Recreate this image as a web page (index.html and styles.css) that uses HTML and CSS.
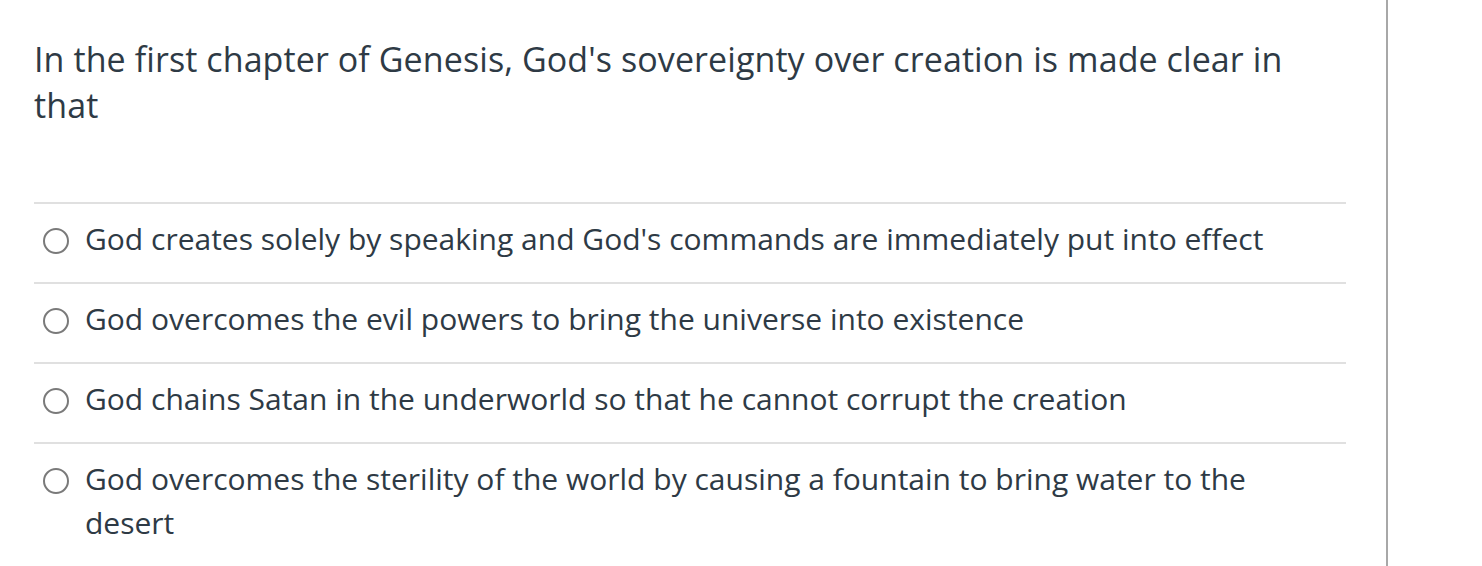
FILE: index.html
```html
<!DOCTYPE html>
<html lang="en">
<head>
    <meta charset="UTF-8">
    <meta name="viewport" content="width=device-width, initial-scale=1.0">
    <title>Question</title>
    <link rel="stylesheet" href="styles.css">
</head>
<body>
    <div class="panel">
        <div class="question">
            In the first chapter of Genesis, God's sovereignty over creation is made clear in that
        </div>

        <ul class="answers">
            <li class="answer">
                <span class="radio"></span>
                <span class="answer-text">God creates solely by speaking and God's commands are immediately put into effect</span>
            </li>
            <li class="answer">
                <span class="radio"></span>
                <span class="answer-text">God overcomes the evil powers to bring the universe into existence</span>
            </li>
            <li class="answer">
                <span class="radio"></span>
                <span class="answer-text">God chains Satan in the underworld so that he cannot corrupt the creation</span>
            </li>
            <li class="answer">
                <span class="radio"></span>
                <span class="answer-text">God overcomes the sterility of the world by causing a fountain to bring water to the desert</span>
            </li>
        </ul>
    </div>
</body>
</html>
```

FILE: styles.css
```css
body {
    margin: 0;
    background: #fff;
    font-family: "Open Sans", "Liberation Sans", sans-serif;
    color: #2e3a45;
    overflow: hidden;
}
.panel {
    width: 1312px;
    min-height: 566px;
    padding: 36px 40px 0 34px;
    border-right: 2px solid #a8a8a8;
}
.question {
    max-width: 1290px;
    font-size: 34px;
    line-height: 46px;
    letter-spacing: 0.09px;
    margin-bottom: 74px;
}
.answers {
    list-style: none;
    margin: 0;
    padding: 0;
}
.answer {
    display: flex;
    align-items: flex-start;
    gap: 16px;
    padding: 13px 30px 21px 9px;
    border-top: 2px solid #e0e0e0;
    font-size: 30px;
    line-height: 44px;
}
.radio {
    flex: none;
    width: 22px;
    height: 22px;
    margin-top: 11px;
    border: 2px solid #7a7a7a;
    border-radius: 50%;
}
```
